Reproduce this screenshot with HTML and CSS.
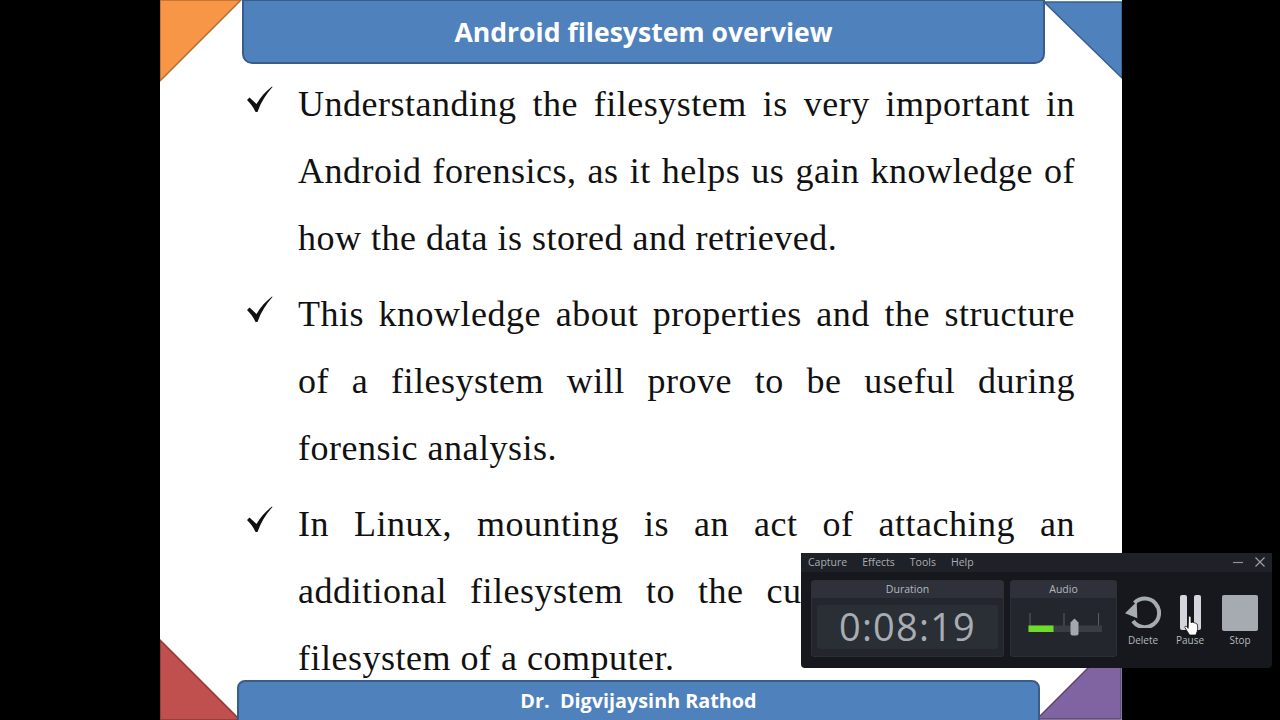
FILE: index.html
```html
<!DOCTYPE html>
<html>
<head>
    <title>Android filesystem overview</title>
    <meta charset="UTF-8">
    <link rel="stylesheet" href="styles.css">
</head>
<body>
    <div class="slide">
        <svg class="corner corner-tl" width="84" height="84" viewBox="0 0 84 84"><polygon points="0,0 81,0 0,81" fill="#f79646" stroke="#b66d31" stroke-width="1.5"/></svg>
        <svg class="corner corner-tr" width="78" height="80" viewBox="0 0 78 80"><polygon points="0,2 78,2 78,78" fill="#4f81bd" stroke="#385d8a" stroke-width="1.5"/></svg>
        <svg class="corner corner-bl" width="82" height="82" viewBox="0 0 82 82"><polygon points="0,2 80,82 0,82" fill="#c0504d" stroke="#8c3836" stroke-width="1.5"/></svg>
        <svg class="corner corner-br" width="86" height="86" viewBox="0 0 86 86"><polygon points="85,1 85,85 1,85" fill="#8064a2" stroke="#5c4776" stroke-width="1.5"/></svg>

        <header class="title-bar">Android filesystem overview</header>

        <ul class="points">
            <li>
                <svg class="tick" width="27" height="27" viewBox="0 0 27 27"><path d="M1 14 L3.5 11.5 L10.5 18 C14.5 11 20 5 26 0.5 L26.5 1 C20 8 15 16 11.5 26 L9.5 26 C7.5 21 4 17 1 14 Z"/></svg>
                <p>Understanding the filesystem is very important in Android forensics, as it helps us gain knowledge of how the data is stored and retrieved.</p>
            </li>
            <li>
                <svg class="tick" width="27" height="27" viewBox="0 0 27 27"><path d="M1 14 L3.5 11.5 L10.5 18 C14.5 11 20 5 26 0.5 L26.5 1 C20 8 15 16 11.5 26 L9.5 26 C7.5 21 4 17 1 14 Z"/></svg>
                <p>This knowledge about properties and the structure of a filesystem will prove to be useful during forensic analysis.</p>
            </li>
            <li>
                <svg class="tick" width="27" height="27" viewBox="0 0 27 27"><path d="M1 14 L3.5 11.5 L10.5 18 C14.5 11 20 5 26 0.5 L26.5 1 C20 8 15 16 11.5 26 L9.5 26 C7.5 21 4 17 1 14 Z"/></svg>
                <p>In Linux, mounting is an act of attaching an additional filesystem to the currently accessible filesystem of a computer.</p>
            </li>
        </ul>

        <footer class="author-bar">Dr.&nbsp; Digvijaysinh Rathod</footer>
    </div>

    <div class="recorder">
        <div class="menu-row">
            <nav class="menu">
                <span>Capture</span>
                <span>Effects</span>
                <span>Tools</span>
                <span>Help</span>
            </nav>
            <div class="window-btns">
                <svg width="12" height="12" viewBox="0 0 12 12"><path d="M1 6.5 H11" stroke="#8d9298" stroke-width="1.2"/></svg>
                <svg width="12" height="12" viewBox="0 0 12 12"><path d="M1.5 1.5 L10.5 10.5 M10.5 1.5 L1.5 10.5" stroke="#9a9fa5" stroke-width="1.2"/></svg>
            </div>
        </div>
        <div class="controls">
            <section class="panel panel-duration">
                <h4>Duration</h4>
                <div class="panel-body">
                    <div class="timer">0:08:19</div>
                </div>
            </section>
            <section class="panel panel-audio">
                <h4>Audio</h4>
                <div class="panel-body">
                    <svg width="76" height="28" viewBox="0 0 76 28">
                        <path d="M4 0 V13 M38 0 V13 M72.5 0 V13" stroke="#5a5f66" stroke-width="1"/>
                        <rect x="2.5" y="12.5" width="74" height="6.5" fill="#3a3d43"/>
                        <rect x="2.5" y="12.5" width="25" height="6.5" fill="#6fdc2c"/>
                        <path d="M48.5 5.5 L52.5 9.5 V20.5 Q52.5 22.5 50.5 22.5 H46.5 Q44.5 22.5 44.5 20.5 V9.5 Z" fill="#a3a8ae"/>
                    </svg>
                </div>
            </section>
            <div class="actions">
                <div class="action">
                    <svg width="36" height="33" viewBox="0 0 36 33">
                        <path d="M9.5 8 A14.3 14.3 0 1 1 8 26" fill="none" stroke="#a6abb1" stroke-width="4"/>
                        <polygon points="0,18.3 11.7,6.7 12.3,23.3" fill="#a6abb1"/>
                    </svg>
                    <span>Delete</span>
                </div>
                <div class="action">
                    <div class="pause-icon"><i></i><i></i></div>
                    <svg class="hand" width="17" height="21" viewBox="0 0 16 22">
                        <path d="M5 1.5 Q6.5 0.5 7.5 2 V8 L9 7.5 L10.5 8 L12 8.5 L14 9.5 Q15 14 14 17 L12.5 21 H6 L1 13 Q1 11 3 12 L4.5 14 Z" fill="#fff" stroke="#111" stroke-width="0.8"/>
                    </svg>
                    <span>Pause</span>
                </div>
                <div class="action">
                    <div class="stop-icon"></div>
                    <span>Stop</span>
                </div>
            </div>
        </div>
    </div>
</body>
</html>
```
FILE: styles.css
```css
body {
    margin: 0;
    background: #000;
    height: 720px;
    overflow: hidden;
    position: relative;
}
.slide {
    position: relative;
    width: 962px;
    height: 720px;
    margin-left: 160px;
    background: #fff;
    display: flex;
    flex-direction: column;
    overflow: hidden;
}
.corner {
    position: absolute;
}
.corner-tl {
    left: 0;
    top: 0;
}
.corner-tr {
    right: 0;
    top: 0;
}
.corner-bl {
    left: 0;
    bottom: 0;
}
.corner-br {
    right: 0;
    bottom: 0;
}
.title-bar, .author-bar {
    position: relative;
    box-sizing: border-box;
    flex: none;
    width: 803px;
    background: #4f81bd;
    border: 2px solid #385d8a;
    color: #fff;
    font-family: "Open Sans", sans-serif;
    font-weight: 700;
    text-align: center;
}
.title-bar {
    height: 65px;
    margin-left: 82px;
    margin-top: -1px;
    border-radius: 0 0 10px 10px;
    line-height: 63px;
    font-size: 26.6px;
}
.author-bar {
    height: 44px;
    margin-left: 77px;
    margin-bottom: -4px;
    border-radius: 8px 8px 0 0;
    line-height: 38px;
    font-size: 19.8px;
}
.points {
    flex: 1;
    min-height: 0;
    margin: 0;
    padding: 7px 47px 0 86px;
    list-style: none;
    font-family: "Liberation Serif", serif;
    font-size: 36px;
    letter-spacing: 0.5px;
    line-height: 67px;
    color: #111;
}
.points li {
    display: flex;
    gap: 25px;
    margin-bottom: 9px;
}
.points p {
    flex: 1;
    margin: 0;
    text-align: justify;
}
.tick {
    flex: none;
    margin-top: 15px;
    fill: #111;
}
.recorder {
    position: absolute;
    left: 801px;
    top: 553px;
    width: 471px;
    height: 115px;
    box-sizing: border-box;
    background: #16181d;
    border-radius: 4px;
    font-family: "Open Sans", sans-serif;
    color: #a9aeb4;
}
.menu-row {
    display: flex;
    justify-content: space-between;
    align-items: center;
    height: 18px;
    padding: 0 6px 1px 7px;
    background: #1e2127;
    font-size: 10.5px;
}
.menu {
    display: flex;
    gap: 15px;
}
.window-btns {
    display: flex;
    gap: 10px;
}
.controls {
    display: flex;
    padding: 8px 0 0 10px;
    gap: 6px;
}
.panel {
    height: 77px;
    box-sizing: border-box;
    background: #23262c;
    border: 1px solid #2b2f36;
    border-radius: 3px;
    display: flex;
    flex-direction: column;
}
.panel h4 {
    margin: 0;
    height: 17px;
    line-height: 16px;
    background: #2e3139;
    font-size: 10.5px;
    font-weight: 400;
    text-align: center;
    color: #b4b9be;
}
.panel-body {
    flex: 1;
    display: flex;
    align-items: center;
    justify-content: center;
}
.panel-duration {
    width: 193px;
}
.panel-audio {
    width: 107px;
}
.timer {
    width: 181px;
    height: 44px;
    background: #2a2e35;
    border-radius: 3px;
    text-align: center;
    font-size: 38px;
    line-height: 42px;
    letter-spacing: 1.2px;
    color: #a7adb3;
}
.actions {
    display: flex;
    padding: 15px 0 0 2px;
    gap: 11px;
}
.action {
    position: relative;
    width: 36px;
    height: 52px;
    display: flex;
    flex-direction: column;
    align-items: center;
    justify-content: space-between;
    font-size: 10px;
    color: #b4b9be;
}
.action:last-child {
    margin-left: 3px;
}
.pause-icon {
    display: flex;
    gap: 7px;
    height: 35px;
}
.pause-icon i {
    display: block;
    width: 7px;
    background: #d3d7dd;
    border-radius: 2px;
}
.hand {
    position: absolute;
    left: 11px;
    top: 20px;
}
.stop-icon {
    flex: none;
    width: 36px;
    height: 36px;
    background: #a6abb1;
    border-radius: 2px;
}
```
